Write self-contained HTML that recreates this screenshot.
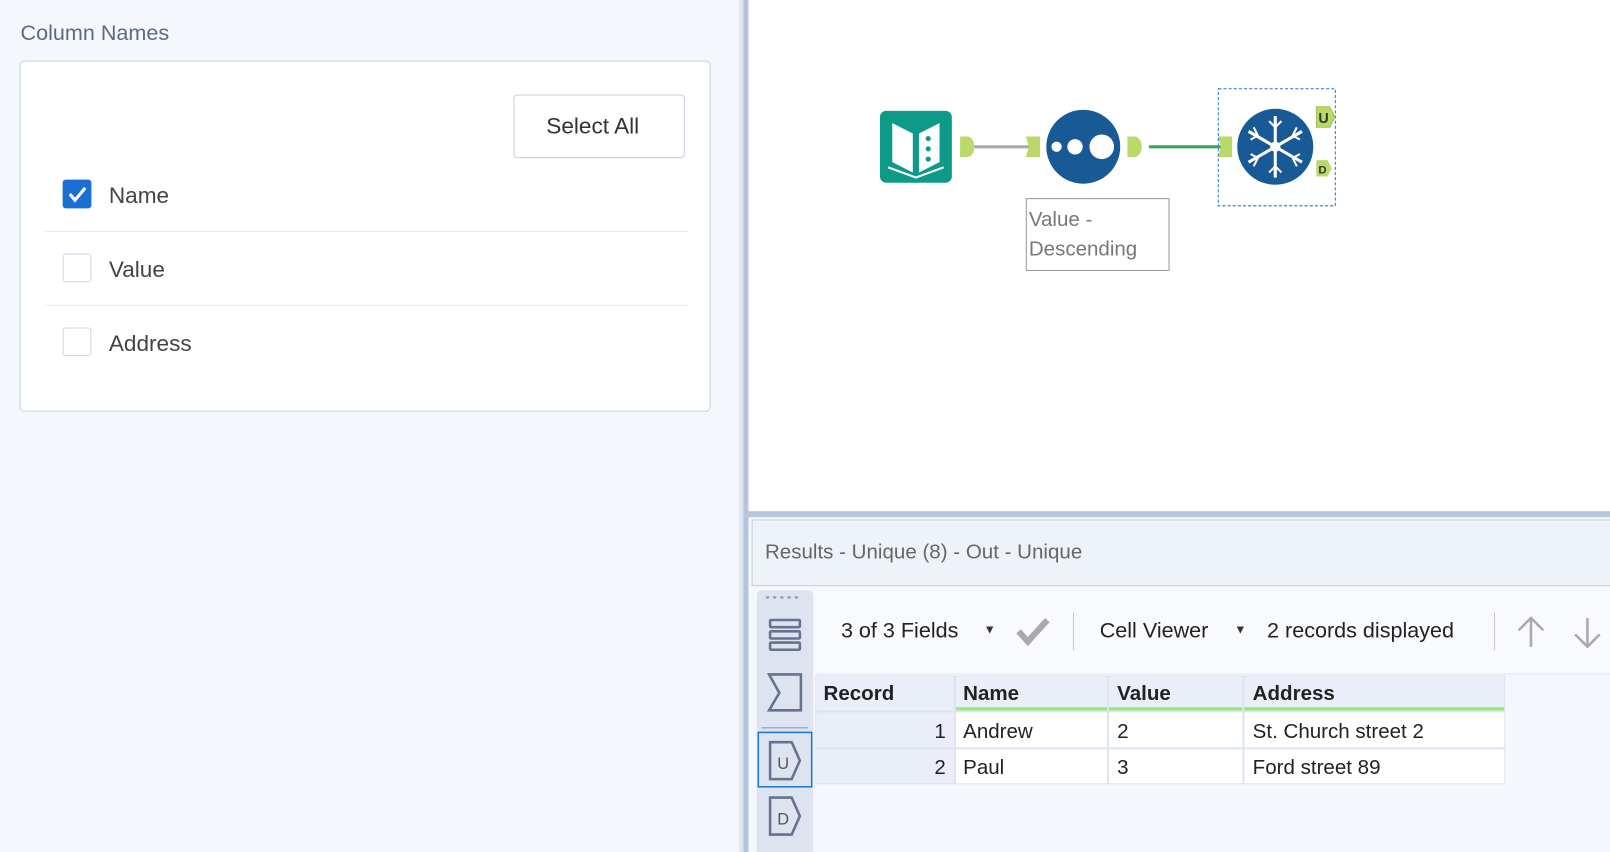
<!DOCTYPE html>
<html><head><meta charset="utf-8"><style>
html,body{margin:0;padding:0;width:1610px;height:852px;overflow:hidden;background:#fff}
#w{position:absolute;left:0;top:0;width:1568px;height:830px;transform:scale(1.02679,1.0265);transform-origin:0 0;font-family:"Liberation Sans",sans-serif}
.a{position:absolute}
.t{position:absolute;white-space:nowrap}
</style></head><body><div id="w">
<div class="a" style="left:0;top:0;width:720px;height:830px;background:#f4f7fc"></div>
<div class="t" style="left:20px;top:21px;font-size:21px;color:#5c6b85">Column Names</div>
<div class="a" style="left:19px;top:59px;width:671px;height:340px;border:1px solid #c5cfe2;border-radius:4px;background:#fff"></div>
<div class="a" style="left:500px;top:92px;width:165px;height:60px;border:1px solid #c5cfe2;border-radius:4px;background:#fff"></div>
<div class="t" style="left:532px;top:110px;font-size:22px;color:#333">Select All</div>
<div class="a" style="left:61px;top:175px;width:28px;height:28px;background:#1a6fd4;border-radius:3px"></div>
<svg class="a" style="left:61px;top:175px" width="28" height="28"><path d="M7 14 L12 20 L22 8" stroke="#fff" stroke-width="3" fill="none"/></svg>
<div class="t" style="left:106px;top:178px;font-size:22px;color:#444">Name</div>
<div class="a" style="left:44px;top:225px;width:626px;height:1px;background:#e3e8f2"></div>
<div class="a" style="left:61px;top:247px;width:26px;height:26px;border:1px solid #cdd5e4;border-radius:3px"></div>
<div class="t" style="left:106px;top:250px;font-size:22px;color:#444">Value</div>
<div class="a" style="left:44px;top:297px;width:626px;height:1px;background:#e3e8f2"></div>
<div class="a" style="left:61px;top:319px;width:26px;height:26px;border:1px solid #cdd5e4;border-radius:3px"></div>
<div class="t" style="left:106px;top:322px;font-size:22px;color:#444">Address</div>
<div class="a" style="left:720px;top:0;width:4px;height:830px;background:#dfe5ef"></div>
<div class="a" style="left:724px;top:0;width:5px;height:830px;background:#b4c4de"></div>
<div class="a" style="left:729px;top:0;width:839px;height:498px;background:#fff"></div>
<svg class="a" style="left:729px;top:0" width="839" height="498">
 <line x1="220" y1="143" x2="275" y2="143" stroke="#aaa" stroke-width="3"/>
 <line x1="390" y1="143" x2="460" y2="143" stroke="#3aa655" stroke-width="3"/>
 <rect x="128" y="108" width="70" height="70" rx="6" fill="#0e9a89"/>
 <path d="M140 120 L160 130 L160 168 L140 158Z M186 120 L166 130 L166 168 L186 158Z" fill="#fff"/>
 <circle cx="175" cy="135" r="2.5" fill="#0e9a89"/><circle cx="175" cy="145" r="2.5" fill="#0e9a89"/><circle cx="175" cy="155" r="2.5" fill="#0e9a89"/>
 <path d="M136 163 L163 173 L190 163" stroke="#fff" stroke-width="2" fill="none"/>
 <path d="M206 133 h7 a7 10 0 0 1 0 20 h-7z" fill="#b9da6b"/>
 <path d="M270 133 h14 v20 h-14 l3 -10z" fill="#b9da6b"/>
 <path d="M369 133 h7 a7 10 0 0 1 0 20 h-7z" fill="#b9da6b"/>
 <path d="M457 133 h14 v20 h-14 l3 -10z" fill="#b9da6b"/>
 <circle cx="326" cy="143" r="36" fill="#185a96"/>
 <circle cx="300" cy="143" r="5" fill="#fff"/><circle cx="318" cy="143" r="7.5" fill="#fff"/><circle cx="344" cy="143" r="12" fill="#fff"/>
 <rect x="270.5" y="193.5" width="139" height="70" fill="#fff" stroke="#999"/>
 <text x="273" y="220" font-size="20" fill="#777" font-family="Liberation Sans">Value -</text>
 <text x="273" y="249" font-size="20" fill="#777" font-family="Liberation Sans">Descending</text>
 <rect x="457.5" y="86.5" width="114" height="114" fill="none" stroke="#1f78d1" stroke-dasharray="3,2"/>
 <circle cx="513" cy="143" r="37" fill="#185a96"/>
 <g stroke="#fff" stroke-width="3"><line x1="513" y1="113" x2="513" y2="173"/><line x1="487" y1="128" x2="539" y2="158"/><line x1="487" y1="158" x2="539" y2="128"/></g>
 <g stroke="#fff" stroke-width="2" fill="none"><path d="M507 118 L513 124 L519 118 M507 168 L513 162 L519 168"/><path d="M492 124 L496 132 L489 136 M534 124 L530 132 L537 136 M492 162 L496 154 L489 150 M534 162 L530 154 L537 150"/></g>
 <circle cx="513" cy="143" r="5" fill="#fff"/>
 <path d="M553 104 h13 l5 10 l-5 10 h-13z" fill="#b9da6b" stroke="#9cc24d"/>
 <text x="555" y="120" font-size="14" font-weight="bold" fill="#333" font-family="Liberation Sans">U</text>
 <path d="M553 156 h11 l4 8 l-4 8 h-11z" fill="#b9da6b"/>
 <text x="555" y="169" font-size="11" font-weight="bold" fill="#333" font-family="Liberation Sans">D</text>
</svg>
<div class="a" style="left:729px;top:498px;width:839px;height:6px;background:#b8c6dc"></div>
<div class="a" style="left:729px;top:504px;width:839px;height:326px;background:#f4f7fc"></div>
<div class="a" style="left:732px;top:506px;width:836px;height:63px;background:#eef2f9;border:1px solid #c8ccd4;border-right:none"></div>
<div class="t" style="left:745px;top:527px;font-size:20px;color:#666">Results - Unique (8) - Out - Unique</div>
<div class="a" style="left:737px;top:575px;width:55px;height:255px;background:#dde4ef;border-radius:5px 5px 0 0"></div>
<svg class="a" style="left:737px;top:575px" width="56" height="255">
 <g fill="#8892a6"><rect x="9" y="6" width="3" height="2"/><rect x="16" y="6" width="3" height="2"/><rect x="23" y="6" width="3" height="2"/><rect x="30" y="6" width="3" height="2"/><rect x="37" y="6" width="3" height="2"/></g>
 <g fill="none" stroke="#66728f" stroke-width="2.5"><rect x="13" y="29" width="29" height="7" rx="1"/><rect x="13" y="40" width="29" height="7" rx="1"/><rect x="13" y="51" width="29" height="7" rx="1"/>
 <path d="M12 82 H43 V117 H12 L22 100 Z"/>
 <path d="M13 148 H34 L42 166 L34 184 H13 Z"/><path d="M13 202 H34 L42 220 L34 238 H13 Z"/></g>
 <line x1="5" y1="134" x2="50" y2="134" stroke="#aab" stroke-width="1.5"/>
 <rect x="1.5" y="138.5" width="52" height="53" fill="none" stroke="#1a78d6" stroke-width="1.5"/>
 <text x="20" y="174" font-size="16" fill="#555" font-family="Liberation Sans">U</text>
 <text x="20" y="228" font-size="16" fill="#555" font-family="Liberation Sans">D</text>
</svg>
<div class="a" style="left:794px;top:576px;width:774px;height:80px;background:#f8fafe;border-bottom:1px solid #e6ebf3"></div>
<div class="t" style="left:819px;top:603px;font-size:21px;color:#222">3 of 3 Fields</div>
<div class="t" style="left:958px;top:606px;font-size:12px;color:#333">▼</div>
<svg class="a" style="left:988px;top:600px" width="36" height="30"><path d="M4 15 L13 25 L32 4" stroke="#aaa" stroke-width="6" fill="none"/></svg>
<div class="a" style="left:1045px;top:596px;width:1px;height:38px;background:#ccc"></div>
<div class="t" style="left:1071px;top:603px;font-size:21px;color:#222">Cell Viewer</div>
<div class="t" style="left:1202px;top:606px;font-size:12px;color:#333">▼</div>
<div class="t" style="left:1234px;top:603px;font-size:21px;color:#222">2 records displayed</div>
<div class="a" style="left:1455px;top:596px;width:1px;height:38px;background:#ccc"></div>
<svg class="a" style="left:1474px;top:598px" width="94" height="36"><g stroke="#aaa" stroke-width="2.5" fill="none"><path d="M17 32 V4 M5 16 L17 4 L29 16"/><path d="M72 4 V32 M60 20 L72 32 L84 20"/></g></svg>
<div class="a" style="left:794px;top:658px;width:672px;height:106px;background:#dde4ef"></div>
<div class="a" style="left:795px;top:659px;width:134px;height:33px;background:#e9eef8"></div>
<div class="a" style="left:931px;top:659px;width:147px;height:30px;background:#e9eef8;border-bottom:3px solid #93ec6f"></div>
<div class="a" style="left:1080px;top:659px;width:130px;height:30px;background:#e9eef8;border-bottom:3px solid #93ec6f"></div>
<div class="a" style="left:1212px;top:659px;width:253px;height:30px;background:#e9eef8;border-bottom:3px solid #93ec6f"></div>
<div class="t" style="left:802px;top:665px;font-size:20px;font-weight:bold;color:#222">Record</div>
<div class="t" style="left:938px;top:665px;font-size:20px;font-weight:bold;color:#222">Name</div>
<div class="t" style="left:1088px;top:665px;font-size:20px;font-weight:bold;color:#222">Value</div>
<div class="t" style="left:1220px;top:665px;font-size:20px;font-weight:bold;color:#222">Address</div>
<div class="a" style="left:795px;top:694px;width:134px;height:34px;background:#e9eef8"></div>
<div class="a" style="left:931px;top:694px;width:147px;height:34px;background:#fff"></div>
<div class="a" style="left:1080px;top:694px;width:130px;height:34px;background:#fff"></div>
<div class="a" style="left:1212px;top:694px;width:253px;height:34px;background:#fff"></div>
<div class="a" style="left:795px;top:730px;width:134px;height:33px;background:#e9eef8"></div>
<div class="a" style="left:931px;top:730px;width:147px;height:33px;background:#fff"></div>
<div class="a" style="left:1080px;top:730px;width:130px;height:33px;background:#fff"></div>
<div class="a" style="left:1212px;top:730px;width:253px;height:33px;background:#fff"></div>
<div class="t" style="left:910px;top:702px;font-size:20px;color:#222">1</div>
<div class="t" style="left:938px;top:702px;font-size:20px;color:#222">Andrew</div>
<div class="t" style="left:1088px;top:702px;font-size:20px;color:#222">2</div>
<div class="t" style="left:1220px;top:702px;font-size:20px;color:#222">St. Church street 2</div>
<div class="t" style="left:910px;top:737px;font-size:20px;color:#222">2</div>
<div class="t" style="left:938px;top:737px;font-size:20px;color:#222">Paul</div>
<div class="t" style="left:1088px;top:737px;font-size:20px;color:#222">3</div>
<div class="t" style="left:1220px;top:737px;font-size:20px;color:#222">Ford street 89</div>
</div></body></html>
